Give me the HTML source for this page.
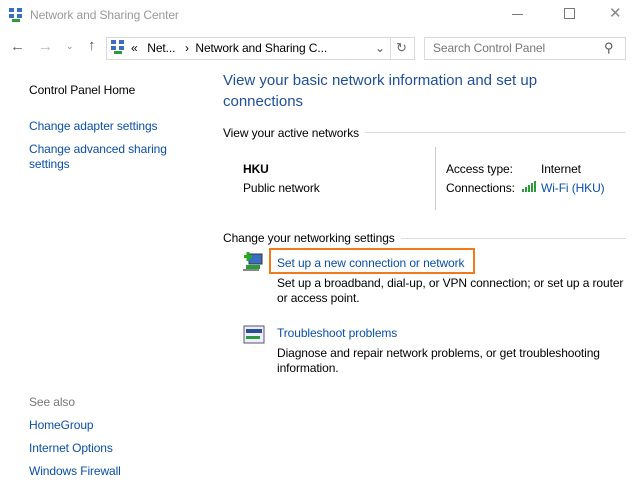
<!DOCTYPE html>
<html><head><style>
body{margin:0;width:636px;height:491px;background:#fff;font-family:"Liberation Sans",sans-serif;font-size:12px;letter-spacing:-0.1px;color:#000;position:relative;overflow:hidden}
.a{position:absolute;white-space:nowrap}
.l{color:#0b4fa6}
.g{color:#777}
</style></head><body>
<svg class="a" style="left:8px;top:7px" width="16" height="16"><rect x="1" y="1" width="5" height="4" fill="#3a6fbf"/><rect x="9" y="1" width="5" height="4" fill="#3a6fbf"/><rect x="1" y="7" width="5" height="4" fill="#3a6fbf"/><rect x="9" y="7" width="5" height="4" fill="#3a6fbf"/><rect x="4" y="12" width="8" height="3" fill="#2a9a3a"/></svg>
<div class="a" style="left:30px;top:8px;color:#999">Network and Sharing Center</div>
<div class="a" style="left:512px;top:14px;width:11px;height:1px;background:#777"></div>
<div class="a" style="left:564px;top:8px;width:9px;height:9px;border:1px solid #777"></div>
<div class="a" style="left:609px;top:4px;font-size:15px;color:#888">✕</div>
<div class="a" style="left:10px;top:38px;font-size:15px;color:#666">←</div>
<div class="a" style="left:38px;top:38px;font-size:15px;color:#bbb">→</div>
<div class="a" style="left:66px;top:41px;font-size:9px;color:#888">⌄</div>
<div class="a" style="left:88px;top:37px;font-size:15px;color:#555">↑</div>
<div class="a" style="left:106px;top:37px;width:307px;height:21px;border:1px solid #d9d9d9"></div>
<svg class="a" style="left:110px;top:39px" width="16" height="16"><rect x="1" y="1" width="5" height="4" fill="#3a6fbf"/><rect x="9" y="1" width="5" height="4" fill="#3a6fbf"/><rect x="1" y="7" width="5" height="4" fill="#3a6fbf"/><rect x="9" y="7" width="5" height="4" fill="#3a6fbf"/><rect x="4" y="12" width="8" height="3" fill="#2a9a3a"/></svg>
<div class="a" style="left:131px;top:41px">«&nbsp;&nbsp;&nbsp;Net...&nbsp;&nbsp;&nbsp;›&nbsp;&nbsp;Network and Sharing C...</div>
<div class="a" style="left:375px;top:41px;color:#555">⌄</div>
<div class="a" style="left:390px;top:37px;width:1px;height:23px;background:#d9d9d9"></div>
<div class="a" style="left:396px;top:40px;color:#666;font-size:13px">↻</div>
<div class="a" style="left:424px;top:37px;width:200px;height:21px;border:1px solid #d9d9d9"></div>
<div class="a g" style="left:433px;top:41px">Search Control Panel</div>
<div class="a" style="left:604px;top:40px;color:#555;font-size:13px">⚲</div>
<div class="a" style="left:29px;top:83px">Control Panel Home</div>
<div class="a l" style="left:29px;top:119px">Change adapter settings</div>
<div class="a l" style="left:29px;top:142px;line-height:15px">Change advanced sharing<br>settings</div>
<div class="a g" style="left:29px;top:395px">See also</div>
<div class="a l" style="left:29px;top:418px">HomeGroup</div>
<div class="a l" style="left:29px;top:441px">Internet Options</div>
<div class="a l" style="left:29px;top:464px">Windows Firewall</div>
<div class="a" style="left:223px;top:70px;font-size:15px;color:#1e4f98;line-height:21px;letter-spacing:0">View your basic network information and set up<br>connections</div>
<div class="a" style="left:223px;top:126px">View your active networks</div>
<div class="a" style="left:365px;top:132px;width:261px;height:1px;background:#ddd"></div>
<div class="a" style="left:243px;top:162px;font-weight:bold">HKU</div>
<div class="a" style="left:243px;top:181px">Public network</div>
<div class="a" style="left:435px;top:147px;width:1px;height:63px;background:#ccc"></div>
<div class="a" style="left:446px;top:162px">Access type:</div>
<div class="a" style="left:541px;top:162px">Internet</div>
<div class="a" style="left:446px;top:181px">Connections:</div>
<svg class="a" style="left:522px;top:181px" width="14" height="12"><rect x="0" y="8" width="2" height="3" fill="#2a9a3a"/><rect x="3" y="6" width="2" height="5" fill="#2a9a3a"/><rect x="6" y="4" width="2" height="7" fill="#2a9a3a"/><rect x="9" y="2" width="2" height="9" fill="#2a9a3a"/><rect x="12" y="0" width="2" height="11" fill="#2a9a3a"/></svg>
<div class="a l" style="left:541px;top:181px">Wi-Fi (HKU)</div>
<div class="a" style="left:223px;top:231px">Change your networking settings</div>
<div class="a" style="left:401px;top:238px;width:225px;height:1px;background:#ddd"></div>
<svg class="a" style="left:241px;top:251px" width="24" height="22"><rect x="8" y="3" width="13" height="10" fill="#3a6fbf" stroke="#334"/><rect x="3" y="4" width="8" height="3" fill="#2a2"/><rect x="5.5" y="1" width="3" height="9" fill="#2a2"/><rect x="5" y="14" width="14" height="4" fill="#2a9a3a"/><rect x="2" y="18" width="16" height="2" fill="#888"/></svg>
<div class="a" style="left:269px;top:248px;width:202px;height:22px;border:2px solid #f27a1a"></div>
<div class="a l" style="left:277px;top:256px">Set up a new connection or network</div>
<div class="a" style="left:277px;top:276px;line-height:15px">Set up a broadband, dial-up, or VPN connection; or set up a router<br>or access point.</div>
<svg class="a" style="left:243px;top:325px" width="22" height="20"><rect x="1" y="1" width="20" height="17" fill="#eef" stroke="#556"/><rect x="3" y="4" width="16" height="4" fill="#2a4f98"/><rect x="3" y="11" width="14" height="3" fill="#2a9a3a"/></svg>
<div class="a l" style="left:277px;top:326px">Troubleshoot problems</div>
<div class="a" style="left:277px;top:346px;line-height:15px">Diagnose and repair network problems, or get troubleshooting<br>information.</div>
</body></html>
